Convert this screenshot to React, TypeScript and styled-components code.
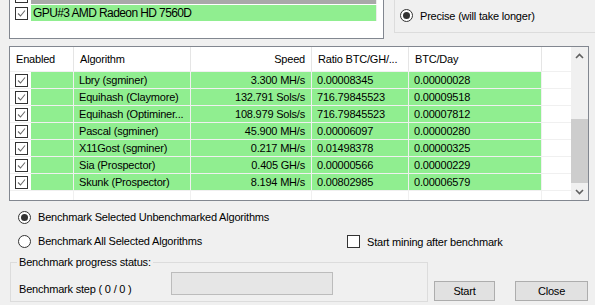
import React from "react";
import styled, { createGlobalStyle } from "styled-components";

const Global = createGlobalStyle`
  html, body { margin: 0; padding: 0; background: #f0f0f0; }
  body { font-family: "Liberation Sans", Arial, sans-serif; font-size: 11px; letter-spacing: -0.2px; color: #000; }
  * { box-sizing: border-box; }
`;

const GREEN = "#90ee90";
const GRAY_ROW = "#a9a9a9";

const Window = styled.div`
  width: 595px;
  height: 305px;
  overflow: hidden;
  background: #f0f0f0;
  display: flex;
  flex-direction: column;
`;

const TopArea = styled.div`
  display: flex;
  align-items: flex-start;
  height: 39px;
  margin-bottom: 7px;
`;

const DeviceList = styled.div`
  margin-left: 9px;
  width: 375px;
  height: 39px;
  flex: none;
  background: #fff;
  border: 1px solid #828790;
  border-top: none;
  overflow: hidden;
`;

const DeviceRows = styled.div`
  margin-top: -12px;
`;

const DeviceRow = styled.div`
  display: flex;
  height: 17px;
  border-bottom: 1px solid #fff;
`;

const CheckArea = styled.div`
  width: 21px;
  flex: none;
  background: #fff;
  display: flex;
  align-items: center;
  padding-left: 5px;
`;

const DeviceName = styled.div<{ $bg: string }>`
  width: 346px;
  flex: none;
  background: ${(p) => p.$bg};
  border-right: 1px solid #ececec;
  padding-left: 2px;
  font-size: 12px;
  letter-spacing: -0.6px;
  line-height: 16px;
  white-space: nowrap;
  overflow: hidden;
`;

const PreciseGroup = styled.div`
  margin-left: 10px;
  margin-right: -20px;
  flex: 1;
  height: 33px;
  border: 1px solid #dcdcdc;
  border-top: none;
  display: flex;
  align-items: center;
  padding-left: 5px;
  padding-bottom: 1px;
`;

const OptionLabel = styled.label`
  display: flex;
  align-items: center;
  gap: 7px;
  line-height: 16px;
  white-space: nowrap;
`;

const Radio = styled.span<{ $checked?: boolean }>`
  width: 13px;
  height: 13px;
  border-radius: 50%;
  border: 1px solid #333;
  background: #fff;
  display: inline-flex;
  align-items: center;
  justify-content: center;
  flex: none;
  &::after {
    content: "";
    width: 7px;
    height: 7px;
    border-radius: 50%;
    background: ${(p) => (p.$checked ? "#333" : "transparent")};
  }
`;

const Table = styled.div`
  margin-left: 9px;
  width: 580px;
  height: 155px;
  flex: none;
  border: 1px solid #828790;
  background: #fff;
  display: flex;
  overflow: hidden;
`;

const GridArea = styled.div`
  width: 561px;
  flex: none;
  display: flex;
  flex-direction: column;
`;

const COLS = [64, 117, 121, 97, 133, 29];

const HeaderRow = styled.div`
  display: flex;
  height: 25px;
  flex: none;
  border-bottom: 1px solid #f0f0f0;
`;

const HeaderCell = styled.div<{ $w: number; $align?: string; $last?: boolean }>`
  width: ${(p) => p.$w}px;
  flex: none;
  border-right: ${(p) => (p.$last ? "none" : "1px solid #e5e5e5")};
  display: flex;
  align-items: center;
  justify-content: ${(p) => p.$align || "flex-start"};
  padding: 0 6px 0 6px;
  white-space: nowrap;
  overflow: hidden;
`;

const DataRow = styled.div`
  display: flex;
  height: 17px;
  flex: none;
  border-bottom: 1px solid #f0f0f0;
`;

const Cell = styled.div<{ $w: number; $bg: string; $align?: string; $last?: boolean }>`
  width: ${(p) => p.$w}px;
  flex: none;
  background: ${(p) => p.$bg};
  border-right: ${(p) => (p.$last ? "none" : "1px solid #f0f0f0")};
  display: flex;
  align-items: center;
  justify-content: ${(p) => p.$align || "flex-start"};
  padding: 0 6px 0 5px;
  white-space: nowrap;
  overflow: hidden;
`;

const EnabledCell = styled.div`
  width: 64px;
  flex: none;
  display: flex;
  border-right: 1px solid #f0f0f0;
`;

const EnabledFill = styled.div<{ $bg: string }>`
  flex: 1;
  background: ${(p) => p.$bg};
`;

const Scrollbar = styled.div`
  width: 17px;
  flex: none;
  background: #f0f0f0;
  display: flex;
  flex-direction: column;
`;

const ScrollButton = styled.div`
  height: 17px;
  flex: none;
  display: flex;
  align-items: center;
  justify-content: center;
`;

const Track = styled.div`
  flex: 1;
  display: flex;
  flex-direction: column;
  justify-content: flex-end;
`;

const Thumb = styled.div`
  height: 64px;
  background: #cdcdcd;
`;

const Bottom = styled.div`
  margin-left: 9px;
  display: flex;
  flex-direction: column;
`;

const OptionRow = styled.div<{ $mt: number }>`
  display: grid;
  grid-template-columns: 329px auto;
  align-items: center;
  height: 16px;
  margin-top: ${(p) => p.$mt}px;
  padding-left: 9px;
`;

const CheckOption = styled.label`
  display: flex;
  align-items: center;
  gap: 7px;
  white-space: nowrap;
  padding-top: 1px;
`;

const Box = styled.span`
  width: 13px;
  height: 13px;
  border: 1px solid #333;
  background: #fff;
  flex: none;
`;

const LastRow = styled.div`
  display: flex;
  align-items: flex-end;
  margin-top: 6px;
`;

const ProgressGroup = styled.fieldset`
  margin: 0 0 0 1px;
  width: 418px;
  height: 47px;
  border: 1px solid #dcdcdc;
  padding: 0 8px;
  display: grid;
  grid-template-columns: 152px 162px;
  align-items: start;
`;

const Legend = styled.legend`
  padding: 0 2px;
  margin-left: -2px;
  line-height: 14px;
`;

const StepText = styled.div`
  margin-top: 13px;
  line-height: 14px;
  white-space: nowrap;
`;

const ProgressBar = styled.div`
  margin-top: 3px;
  height: 23px;
  background: #e6e6e6;
  border: 1px solid #bcbcbc;
`;

const Buttons = styled.div`
  display: flex;
  gap: 20px;
  margin-left: 6px;
  margin-bottom: 1px;
`;

const Button = styled.button<{ $w: number }>`
  width: ${(p) => p.$w}px;
  height: 20px;
  background: #e1e1e1;
  border: 1px solid #adadad;
  font: inherit;
  letter-spacing: -0.2px;
  color: #000;
  padding: 0;
  border-radius: 0;
`;

const CheckGlyph = () => (
  <svg width="13" height="13" viewBox="0 0 13 13" style={{ display: "block" }}>
    <rect x="0.5" y="0.5" width="12" height="12" fill="#fff" stroke="#333" />
    <polyline points="3,6.5 5.5,9 10,3.5" fill="none" stroke="#6a6a6a" strokeWidth="1.1" />
  </svg>
);

const Chevron = ({ up }: { up?: boolean }) => (
  <svg width="9" height="6" viewBox="0 0 9 6">
    <polyline
      points={up ? "1,5 4.5,1.5 8,5" : "1,1 4.5,4.5 8,1"}
      fill="none"
      stroke="#606060"
      strokeWidth="1.6"
    />
  </svg>
);

const rows = [
  ["Lbry (sgminer)", "3.300 MH/s", "0.00008345", "0.00000028"],
  ["Equihash (Claymore)", "132.791 Sols/s", "716.79845523", "0.00009518"],
  ["Equihash (Optiminer...", "108.979 Sols/s", "716.79845523", "0.00007812"],
  ["Pascal (sgminer)", "45.900 MH/s", "0.00006097", "0.00000280"],
  ["X11Gost (sgminer)", "0.217 MH/s", "0.01498378", "0.00000325"],
  ["Sia (Prospector)", "0.405 GH/s", "0.00000566", "0.00000229"],
  ["Skunk (Prospector)", "8.194 MH/s", "0.00802985", "0.00006579"],
];

export default function App() {
  return (
    <Window>
      <Global />
      <TopArea>
        <DeviceList>
          <DeviceRows>
            <DeviceRow>
              <CheckArea>
                <CheckGlyph />
              </CheckArea>
              <DeviceName $bg={GRAY_ROW}>GPU#2 AMD Radeon R5 200 / HD 7000 Series</DeviceName>
            </DeviceRow>
            <DeviceRow>
              <CheckArea>
                <CheckGlyph />
              </CheckArea>
              <DeviceName $bg={GREEN}>GPU#3 AMD Radeon HD 7560D</DeviceName>
            </DeviceRow>
          </DeviceRows>
        </DeviceList>
        <PreciseGroup>
          <OptionLabel>
            <Radio $checked />
            Precise (will take longer)
          </OptionLabel>
        </PreciseGroup>
      </TopArea>

      <Table>
        <GridArea>
          <HeaderRow>
            <HeaderCell $w={COLS[0]}>Enabled</HeaderCell>
            <HeaderCell $w={COLS[1]}>Algorithm</HeaderCell>
            <HeaderCell $w={COLS[2]} $align="flex-end">Speed</HeaderCell>
            <HeaderCell $w={COLS[3]}>Ratio BTC/GH/...</HeaderCell>
            <HeaderCell $w={COLS[4]}>BTC/Day</HeaderCell>
            <HeaderCell $w={COLS[5]} $last />
          </HeaderRow>
          {rows.map((r) => (
            <DataRow key={r[0]}>
              <EnabledCell>
                <CheckArea>
                  <CheckGlyph />
                </CheckArea>
                <EnabledFill $bg={GREEN} />
              </EnabledCell>
              <Cell $w={COLS[1]} $bg={GREEN}>{r[0]}</Cell>
              <Cell $w={COLS[2]} $bg={GREEN} $align="flex-end">{r[1]}</Cell>
              <Cell $w={COLS[3]} $bg={GREEN}>{r[2]}</Cell>
              <Cell $w={COLS[4]} $bg={GREEN}>{r[3]}</Cell>
              <Cell $w={COLS[5]} $bg="#fff" $last />
            </DataRow>
          ))}
          <DataRow>
            <Cell $w={COLS[0]} $bg="#fff" />
            <Cell $w={COLS[1]} $bg="#fff" />
            <Cell $w={COLS[2]} $bg="#fff" />
            <Cell $w={COLS[3]} $bg="#fff" />
            <Cell $w={COLS[4]} $bg="#fff" />
            <Cell $w={COLS[5]} $bg="#fff" $last />
          </DataRow>
        </GridArea>
        <Scrollbar>
          <ScrollButton>
            <Chevron up />
          </ScrollButton>
          <Track>
            <Thumb />
          </Track>
          <ScrollButton>
            <Chevron />
          </ScrollButton>
        </Scrollbar>
      </Table>

      <Bottom>
        <OptionRow $mt={8}>
          <OptionLabel>
            <Radio $checked />
            Benchmark Selected Unbenchmarked Algorithms
          </OptionLabel>
        </OptionRow>
        <OptionRow $mt={8}>
          <OptionLabel>
            <Radio />
            Benchmark All Selected Algorithms
          </OptionLabel>
          <CheckOption>
            <Box />
            Start mining after benchmark
          </CheckOption>
        </OptionRow>
        <LastRow>
          <ProgressGroup>
            <Legend>Benchmark progress status:</Legend>
            <StepText>Benchmark step ( 0 / 0 )</StepText>
            <ProgressBar />
          </ProgressGroup>
          <Buttons>
            <Button $w={61}>Start</Button>
            <Button $w={73}>Close</Button>
          </Buttons>
        </LastRow>
      </Bottom>
    </Window>
  );
}
